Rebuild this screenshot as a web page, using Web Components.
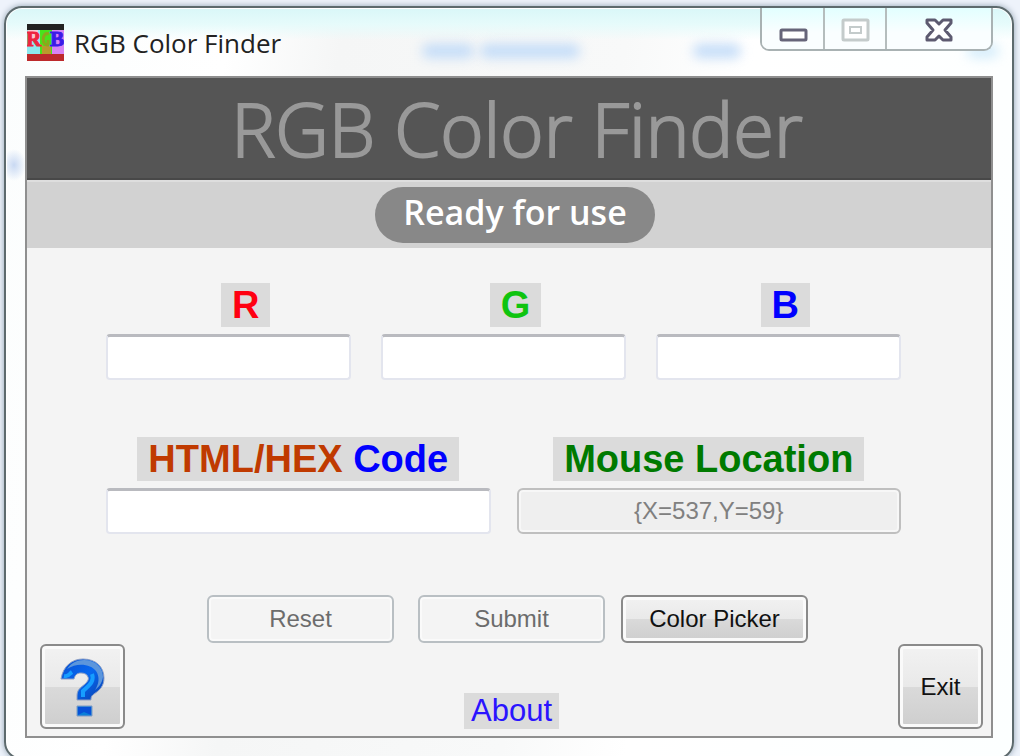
<!DOCTYPE html>
<html lang="en">
<head>
<meta charset="utf-8">
<meta name="viewport" content="width=device-width, initial-scale=1">
<title>RGB Color Finder</title>
<style>
  html { height: 100%; overflow: hidden; background: #eef3fb; }
  body { margin: 0; padding: 6px 6px 0 4px; font-family: "Liberation Sans", Arial, sans-serif; font-size: 24px; color: #111; }
</style>
</head>
<body>
<app-window caption="RGB Color Finder">
  <app-icon slot="icon"></app-icon>
  <app-banner>RGB Color Finder</app-banner>
  <status-strip>Ready for use</status-strip>
  <color-form></color-form>
  <app-footer></app-footer>
</app-window>

<script>
// Shared look of the Windows 7 push buttons
const buttonStyles = `
  button {
    box-sizing: border-box; height: 48px; padding: 0; font: inherit; color: #111;
    border: 2px solid #8a8a8a; border-radius: 6px;
    background: linear-gradient(#f2f2f2 0%, #e9e9e9 50%, #dadada 50%, #cecece 100%);
    box-shadow: inset 0 0 0 3px #fafafa;
  }
  button:disabled { color: #6c6c6c; border-color: #b9bfc3; background: #f4f4f4; box-shadow: inset 0 0 0 2px #fafafa; }
`;

class AppWindow extends HTMLElement {
  constructor() {
    super();
    this.attachShadow({ mode: 'open' });
  }

  connectedCallback() {
    this.shadowRoot.innerHTML = `
      <style>
        :host {
          display: block; padding: 0 19px 20px; border: 2px solid #5d6a6d; border-radius: 18px;
          box-shadow: 0 0 6px #8fa0b0, inset 0 0 0 1px #fff;
          background:
            radial-gradient(ellipse 12px 16px at 8px 157px, #c9d9f3, transparent),
            linear-gradient(#d9f7f8 0, #e6fbfb 16px, transparent 32px),
            linear-gradient(100deg, #fbfdfd 0%, #fff 20%, #f5f6f6 30%, #f8f9f9 55%, #fff 66%, #fcffff 100%);
        }
        header { position: relative; display: flex; align-items: flex-start; height: 68px; }
        .title { display: flex; align-items: center; gap: 10px; flex: 1; padding: 16px 0 0 2px; }
        h1 { margin: 0; font: 400 26px/34px "Open Sans", "Noto Sans", sans-serif; color: #222; }
        .glow { position: absolute; top: 36px; height: 14px; border-radius: 7px; background: #c3dcf8; filter: blur(6px); }
        .date { left: 41%; width: 52px; }
        .date2 { left: 47%; width: 100px; }
        .type { left: 69%; width: 48px; }
        .size { right: -6px; width: 32px; background: #d5edfb; }
        nav { position: relative; display: flex; height: 43px; border: 2px solid #a9b2b3; border-top: 0; border-radius: 0 0 9px 9px; box-sizing: border-box; }
        nav button { padding: 0; border: 0; border-right: 2px solid #b5bdbd; background: linear-gradient(#e2ffff, #fafeff 60%); width: 62px; display: grid; place-items: center; }
        nav button:first-child { border-bottom-left-radius: 7px; width: 63px; }
        nav button:last-child { border-right: 0; border-bottom-right-radius: 7px; width: 104px; }
        main { border: 2px solid #8f8f8f; background: #f4f4f4; }
      </style>
      <header>
        <span class="glow date"></span><span class="glow date2"></span><span class="glow type"></span><span class="glow size"></span>
        <div class="title"><slot name="icon"></slot><h1></h1></div>
        <nav>
          <button aria-label="Minimize"><svg width="34" height="40" fill="#fff" stroke="#666479" stroke-width="3"><rect x="5" y="21" width="25" height="10" rx="1"/></svg></button>
          <button aria-label="Maximize" disabled><svg width="34" height="40" fill="#fff" stroke="#c4cbcb" stroke-width="3"><rect x="5" y="11" width="25" height="20" rx="1"/><rect x="12" y="18" width="11" height="6" stroke-width="2"/></svg></button>
          <button aria-label="Close"><svg width="34" height="40" fill="#fff" stroke="#5d5a70" stroke-width="3" stroke-linejoin="round"><path d="M5 11h8l4 4 4-4h8v3l-6 7 6 7v3h-8l-4-4-4 4H5v-3l6-7-6-7z"/></svg></button>
        </nav>
      </header>
      <main><slot></slot></main>
    `;
    this.shadowRoot.querySelector('h1').textContent = this.getAttribute('caption');
  }
}
customElements.define('app-window', AppWindow);

class AppIcon extends HTMLElement {
  constructor() {
    super();
    this.attachShadow({ mode: 'open' }).innerHTML = `
      <style>
        :host { display: block; width: 37px; height: 37px; }
        svg { display: block; font: bold 21px "Liberation Serif", serif; }
      </style>
      <svg width="37" height="37" viewBox="0 0 37 37" aria-hidden="true">
        <path fill="#8ce9ee" d="M0 5h13v25H0z"/>
        <path fill="#46e51b" d="M13 5h12v25H13z"/>
        <path fill="#d884f3" d="M25 5h12v25H25z"/>
        <path fill="#b99a2c" d="M15 22h9v8h-9z"/>
        <path fill="#fbc9d0" d="M1 6h10v9H1z"/>
        <text x="-1" y="22" fill="#ee2440" stroke="#ee2440">R</text>
        <path fill="none" stroke="#8fa51c" stroke-width="3" d="M22 10c-7-3-8 12-1 11v-5"/>
        <text x="23" y="22" fill="#3c1be8" stroke="#3c1be8">B</text>
        <path fill="#222" d="M0 0h37v6H0z"/>
        <path fill="#bd2a2c" d="M0 30h37v7H0z"/>
      </svg>
    `;
  }
}
customElements.define('app-icon', AppIcon);

class AppBanner extends HTMLElement {
  constructor() {
    super();
    this.attachShadow({ mode: 'open' }).innerHTML = `
      <style>
        :host { display: block; text-align: center; height: 102px; background: #555; border-bottom: 2px solid #484848; box-sizing: border-box; }
        h2 { margin: 0; padding-left: 16px; font: 300 74px/102px "Open Sans", "Noto Sans", sans-serif; color: #999; -webkit-text-stroke: 2px #999; }
      </style>
      <h2><slot></slot></h2>
    `;
  }
}
customElements.define('app-banner', AppBanner);

class StatusStrip extends HTMLElement {
  constructor() {
    super();
    this.attachShadow({ mode: 'open' }).innerHTML = `
      <style>
        :host { display: flex; justify-content: center; box-sizing: border-box; height: 68px; padding: 5px 0 0 12px; background: #d2d2d2; border-top: 2px solid #dedede; }
        span { height: 56px; padding: 0 28px; border-radius: 28px; background: #888; color: #fff; font: 600 34px/50px "Open Sans", "Noto Sans", sans-serif; }
      </style>
      <span role="status"><slot></slot></span>
    `;
  }
}
customElements.define('status-strip', StatusStrip);

class ColorForm extends HTMLElement {
  constructor() {
    super();
    this.attachShadow({ mode: 'open' }).innerHTML = `
      <style>
        :host { display: block; padding: 35px 90px 0 79px; }
        .row { display: grid; grid-auto-flow: column; grid-auto-columns: minmax(0, 1fr); column-gap: 30px; }
        .wide { column-gap: 26px; }
        .labels { margin-bottom: 7px; justify-items: center; }
        .channels { display: flex; justify-content: space-between; padding: 0 91px 0 115px; }
        .codes { margin-top: 57px; }
        label { padding: 0 11px; background: #dbdbdb; font-weight: bold; font-size: 38px; line-height: 44px; white-space: nowrap; }
        .red { color: #f01; } .green { color: #0fc40f; } .blue { color: #00f; }
        .rust { color: #c03a00; } .forest { color: #007a00; }
        input {
          box-sizing: border-box; width: 100%; height: 46px; padding: 0 8px; font: inherit; text-align: center;
          background: #fff; border: 2px solid #e3e5ee; border-top: 3px solid #b9babf; border-radius: 4px;
        }
        input:disabled { color: #808080; background: #efefef; border: 2px solid #bfbfbf; border-radius: 6px; box-shadow: inset 0 0 0 2px #f7f7f7; }
        .actions { display: flex; gap: 16px; justify-content: center; padding-left: 8px; margin-top: 61px; }
        .pair { display: flex; gap: 24px; }
        ${buttonStyles}
        button { width: 187px; }
      </style>
      <div class="labels channels">
        <label class="red" for="r">R</label>
        <label class="green" for="g">G</label>
        <label class="blue" for="b">B</label>
      </div>
      <div class="row"><input id="r" type="text"><input id="g" type="text"><input id="b" type="text"></div>
      <div class="row wide labels codes">
        <label class="rust" for="hex">HTML/HEX <span class="blue">Code</span></label>
        <label class="forest" for="mouse">Mouse Location</label>
      </div>
      <div class="row wide"><input id="hex" type="text"><input id="mouse" type="text" value="{X=537,Y=59}" disabled></div>
      <div class="actions">
        <div class="pair"><button disabled>Reset</button><button disabled>Submit</button></div>
        <button>Color Picker</button>
      </div>
    `;
  }
}
customElements.define('color-form', ColorForm);

class AppFooter extends HTMLElement {
  constructor() {
    super();
    this.attachShadow({ mode: 'open' }).innerHTML = `
      <style>
        :host { display: flex; justify-content: space-between; align-items: flex-end; padding: 1px 8px 7px 13px; }
        ${buttonStyles}
        button { width: 85px; height: 85px; display: grid; place-items: center; }
        a { padding: 0 7px; background: #dbdbdb; color: #2a14ff; font-size: 31px; line-height: 36px; text-decoration: none; }
      </style>
      <button aria-label="Help">
        <svg width="48" height="64" viewBox="0 0 48 64">
          <defs>
            <linearGradient id="q" x1="0" y1="0" x2="1" y2="1">
              <stop offset="0" stop-color="#0a4fd0"/><stop offset=".5" stop-color="#0768f0"/><stop offset="1" stop-color="#0a3fae"/>
            </linearGradient>
          </defs>
          <path fill="url(#q)" stroke="#8fa0c4" d="M2 24C4 11 13 4 24 4c13 0 21 8 21 19 0 8-4 12-10 16-3 2-3 4-3 6H18v-4c0-6 3-8 8-12 3-3 4-5 3-7-1-3-4-4-7-4-4 0-6 2-7 6z"/>
          <path fill="#5c96dc" d="M8 14C12 8 18 5 25 5c12 0 19 8 19 17-1 6-4 10-8 13 4-6 5-13 1-19C32 9 18 7 8 14z"/>
          <path fill="none" stroke="#169dff" stroke-width="4" d="M5 21c5 1 5-2 8-4M33 19c3 8-4 12-9 17v6"/>
          <path fill="#0b7fd8" stroke="#8298c4" d="M18 51h15v10H18z"/>
          <path fill="#0751d8" d="M19 52h13v8l-7-3-6 3z"/>
        </svg>
      </button>
      <a href="#about">About</a>
      <button>Exit</button>
    `;
  }
}
customElements.define('app-footer', AppFooter);
</script>
</body>
</html>
